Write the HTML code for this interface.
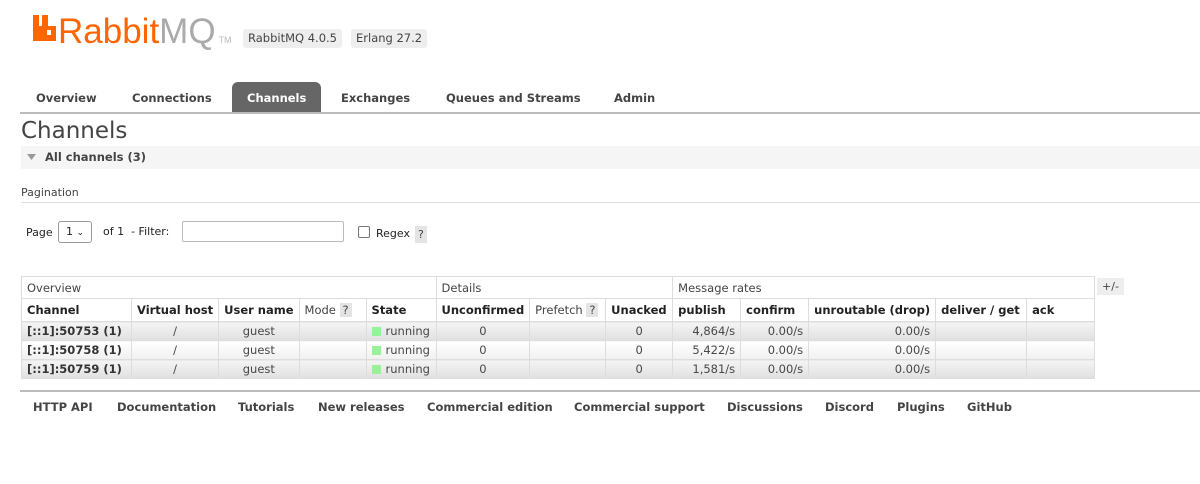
<!DOCTYPE html>
<html><head><meta charset="utf-8"><style>
*{margin:0;padding:0;box-sizing:border-box}
body{width:1200px;height:484px;background:#fff;font-family:"DejaVu Sans","Liberation Sans",sans-serif;font-size:11px;color:#484848;position:relative;overflow:hidden}
.a{position:absolute;white-space:nowrap}
.b{font-weight:bold}
.badge{background:#eee;border-radius:3px;height:19px;line-height:19px;padding:0 5px;font-size:11.5px;color:#444}
.tab{font-weight:bold;top:91px;color:#444;font-size:11.5px}
table{position:absolute;left:21px;top:276px;border-collapse:collapse;table-layout:fixed;font-size:11.5px}
td,th{border:1px solid #ddd;height:19px;padding:0 5px;white-space:nowrap;overflow:hidden}
th{text-align:left;color:#222;height:23px}
.g th{font-weight:normal;color:#444;height:22px}
tr.r1 td,tr.r3 td{background:linear-gradient(#f4f4f4,#e0e0e0)}
tr.r2 td{background:linear-gradient(#fff,#f0f0f0)}
.c{text-align:center}.rt{text-align:right}
.q{background:#e4e4e4;padding:0 3px;font-weight:normal;color:#444}
.sq{display:inline-block;width:9px;height:9px;background:#98f398;margin-right:5px;vertical-align:-1px}
.foot{top:400px;font-weight:bold;color:#444;font-size:11.5px}
</style></head><body>
<svg class="a" style="left:33px;top:15px" width="23" height="26" viewBox="0 0 23 26"><path d="M0 0h6v11h3V0h6v11h8v15H0z" fill="#f60"/><rect x="14" y="15" width="4" height="5" fill="#fff"/></svg>
<div class="a" style="left:58px;top:12px;font-family:'Liberation Sans',sans-serif;font-size:35px;color:#f60">Rabbit<span style="color:#aaa">MQ</span><span style="color:#bbb;font-size:9px;margin-left:3px">TM</span></div>
<div class="a badge" style="left:243px;top:29px">RabbitMQ 4.0.5</div>
<div class="a badge" style="left:351px;top:29px">Erlang 27.2</div>
<div class="a" style="left:232px;top:82px;width:89px;height:31px;background:#666;border-radius:6px 6px 0 0"></div>
<div class="a tab" style="left:36px">Overview</div>
<div class="a tab" style="left:132px">Connections</div>
<div class="a tab" style="left:247px;color:#fff">Channels</div>
<div class="a tab" style="left:341px">Exchanges</div>
<div class="a tab" style="left:446px">Queues and Streams</div>
<div class="a tab" style="left:614px">Admin</div>
<div class="a" style="left:20px;top:112px;width:1180px;height:2px;background:#bbb"></div>
<div class="a" style="left:21px;top:118px;font-size:23px;color:#444">Channels</div>
<div class="a" style="left:21px;top:146px;width:1179px;height:23px;background:#f5f5f5"></div>
<svg class="a" style="left:27px;top:154px" width="9" height="6"><path d="M0 0h9L4.5 6z" fill="#999"/></svg>
<div class="a b" style="left:45px;top:150px;font-size:11.5px;color:#444">All channels (3)</div>
<div class="a" style="left:21px;top:186px;color:#444">Pagination</div>
<div class="a" style="left:21px;top:202px;width:1179px;height:1px;background:#ddd"></div>
<div class="a" style="left:26px;top:226px;color:#222">Page</div>
<div class="a" style="left:58px;top:221px;width:34px;height:22px;border:1px solid #999;border-radius:3px;padding:3px 0 0 7px;color:#222">1 <span style="font-size:9px">&#x2304;</span></div>
<div class="a" style="left:103px;top:225px;color:#222">of 1 &nbsp;- Filter:</div>
<div class="a" style="left:182px;top:221px;width:162px;height:21px;border:1px solid #bbb;border-radius:2px"></div>
<div class="a" style="left:358px;top:226px;width:12px;height:12px;border:1px solid #777;border-radius:2px"></div>
<div class="a" style="left:376px;top:227px;color:#222">Regex</div>
<div class="a q" style="left:415px;top:226px;height:17px;line-height:17px">?</div>
<table>
<colgroup><col style="width:110px"><col style="width:83px"><col style="width:79px"><col style="width:67px"><col style="width:70px"><col style="width:93px"><col style="width:76px"><col style="width:67px"><col style="width:68px"><col style="width:68px"><col style="width:127px"><col style="width:91px"><col style="width:68px"></colgroup>
<tr class="g"><th colspan="5">Overview</th><th colspan="3">Details</th><th colspan="5">Message rates</th></tr>
<tr><th>Channel</th><th>Virtual host</th><th>User name</th><th style="font-weight:normal;color:#444">Mode <span class="q">?</span></th><th>State</th><th>Unconfirmed</th><th style="font-weight:normal;color:#444">Prefetch <span class="q">?</span></th><th>Unacked</th><th>publish</th><th>confirm</th><th>unroutable (drop)</th><th>deliver / get</th><th>ack</th></tr>
<tr class="r1"><td class="b" style="color:#333">[::1]:50753 (1)</td><td class="c">/</td><td class="c">guest</td><td></td><td><span class="sq"></span>running</td><td class="c">0</td><td></td><td class="c">0</td><td class="rt">4,864/s</td><td class="rt">0.00/s</td><td class="rt">0.00/s</td><td></td><td></td></tr>
<tr class="r2"><td class="b" style="color:#333">[::1]:50758 (1)</td><td class="c">/</td><td class="c">guest</td><td></td><td><span class="sq"></span>running</td><td class="c">0</td><td></td><td class="c">0</td><td class="rt">5,422/s</td><td class="rt">0.00/s</td><td class="rt">0.00/s</td><td></td><td></td></tr>
<tr class="r3"><td class="b" style="color:#333">[::1]:50759 (1)</td><td class="c">/</td><td class="c">guest</td><td></td><td><span class="sq"></span>running</td><td class="c">0</td><td></td><td class="c">0</td><td class="rt">1,581/s</td><td class="rt">0.00/s</td><td class="rt">0.00/s</td><td></td><td></td></tr>
</table>
<div class="a" style="left:1097px;top:278px;width:27px;height:17px;background:#eee;line-height:17px;text-align:center;color:#444">+/-</div>
<div class="a" style="left:20px;top:390px;width:1180px;height:2px;background:#bbb"></div>
<div class="a foot" style="left:33px">HTTP API</div>
<div class="a foot" style="left:117px">Documentation</div>
<div class="a foot" style="left:238px">Tutorials</div>
<div class="a foot" style="left:318px">New releases</div>
<div class="a foot" style="left:427px">Commercial edition</div>
<div class="a foot" style="left:574px">Commercial support</div>
<div class="a foot" style="left:727px">Discussions</div>
<div class="a foot" style="left:825px">Discord</div>
<div class="a foot" style="left:897px">Plugins</div>
<div class="a foot" style="left:967px">GitHub</div>
</body></html>
